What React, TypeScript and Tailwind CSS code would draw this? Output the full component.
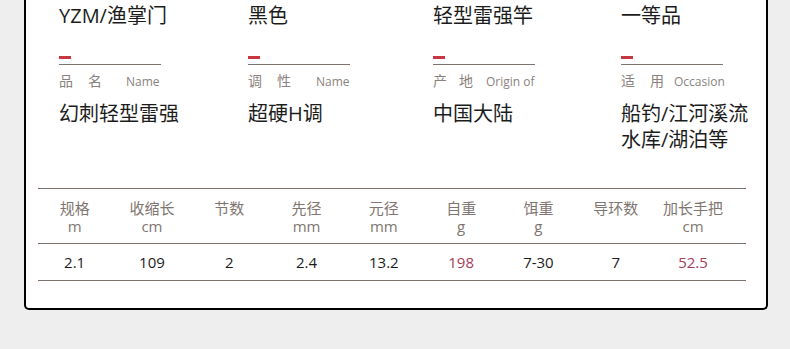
import React from "react";

const attrs = [
  { top: "YZM/渔掌门", a: "品", b: "名", en: "Name", wa: 29, wb: 38, bottom: ["幻刺轻型雷强"] },
  { top: "黑色", a: "调", b: "性", en: "Name", wa: 29, wb: 39, bottom: ["超硬H调"] },
  { top: "轻型雷强竿", a: "产", b: "地", en: "Origin of", wa: 26, wb: 27, bottom: ["中国大陆"] },
  { top: "一等品", a: "适", b: "用", en: "Occasion", wa: 29, wb: 24, bottom: ["船钓/江河溪流", "水库/湖泊等"] },
];

const cols = [
  { h: "规格", u: "m", v: "2.1" },
  { h: "收缩长", u: "cm", v: "109" },
  { h: "节数", u: "", v: "2" },
  { h: "先径", u: "mm", v: "2.4" },
  { h: "元径", u: "mm", v: "13.2" },
  { h: "自重", u: "g", v: "198", red: true },
  { h: "饵重", u: "g", v: "7-30" },
  { h: "导环数", u: "", v: "7" },
  { h: "加长手把", u: "cm", v: "52.5", red: true },
];

export default function App() {
  return (
    <div className="w-[790px] h-[349px] bg-[#eeeeee] overflow-hidden font-['Open_Sans','Noto_Sans_CJK_SC',sans-serif] text-[#1c1c1c]">
      <div className="ml-[24px] w-[744px] h-[310px] bg-white border-x-2 border-b-2 border-black rounded-b-[5px]">
        <div className="pt-[3px] pl-[33px] grid grid-cols-[189px_185px_188px_auto]">
          {attrs.map((it, i) => (
            <div key={i} className="flex flex-col">
              <div className="h-[26px] leading-[26px] text-[20px] whitespace-nowrap">{it.top}</div>
              <div className="mt-[27px] w-[12px] h-[3px] bg-[#c8363f]" />
              <div className="mt-[5px] w-[102px] h-px bg-[#7d726d]" />
              <div className="mt-[7px] h-[18px] flex items-center text-[#8b827d] whitespace-nowrap">
                <span className="text-[14px] leading-[18px] inline-block" style={{ width: it.wa }}>{it.a}</span>
                <span className="text-[14px] leading-[18px] inline-block" style={{ width: it.wb }}>{it.b}</span>
                <span className="text-[12px] leading-[18px] pt-[2px]">{it.en}</span>
              </div>
              <div className="mt-[11px] text-[20px] leading-[26px] whitespace-nowrap">
                {it.bottom.map((l, j) => (
                  <div key={j}>{l}</div>
                ))}
              </div>
            </div>
          ))}
        </div>
        <div className="mt-[35px] ml-[12px] w-[708px]">
          <div className="h-px bg-[#7d726d]" />
          <div className="ml-[-2px] grid grid-cols-[repeat(9,77.3px)] pt-[10px] pb-[8px] text-[15px] leading-[18px] text-[#7f7671]">
            {cols.map((c, i) => (
              <div key={i} className="flex flex-col items-center">
                <div className="h-[18px]">{c.h}</div>
                <div className="h-[18px]">{c.u}</div>
              </div>
            ))}
          </div>
          <div className="h-px bg-[#7d726d]" />
          <div className="ml-[-2px] grid grid-cols-[repeat(9,77.3px)] h-[36px] items-center text-[15px] leading-[18px]">
            {cols.map((c, i) => (
              <div key={i} className={"text-center " + (c.red ? "text-[#a3405a]" : "text-[#1c1c1c]")}>
                {c.v}
              </div>
            ))}
          </div>
          <div className="h-px bg-[#7d726d]" />
        </div>
      </div>
    </div>
  );
}
